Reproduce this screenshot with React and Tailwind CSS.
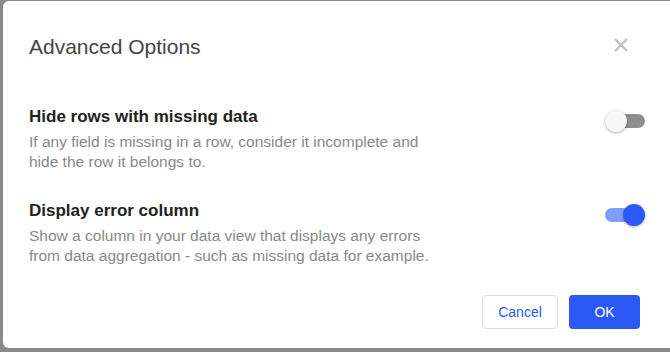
import { useState } from 'react'

const Toggle = ({ on, onChange }) => (
  <button
    type="button"
    onClick={onChange}
    className="relative mt-[5px] h-[22px] w-[40px] shrink-0"
  >
    <span
      className={`absolute left-0 top-[4px] h-[14px] w-[40px] rounded-full ${on ? 'bg-[#7d9ffb]' : 'bg-[#8f8f8f]'}`}
    />
    <span
      className={`absolute top-0 h-[22px] w-[22px] rounded-full shadow-[0_1px_3px_rgba(0,0,0,0.3)] ${on ? 'left-[18px] bg-[#2b59f6]' : 'left-0 bg-[#f7f7f7]'}`}
    />
  </button>
)

const OptionRow = ({ title, text, on, onChange }) => (
  <div className="flex items-start justify-between">
    <div className="w-[420px]">
      <h3 className="text-[17px] font-bold leading-[24px] text-[#222]">{title}</h3>
      <p className="mt-[3px] text-[15.5px] leading-[20px] text-[#888]">{text}</p>
    </div>
    <Toggle on={on} onChange={onChange} />
  </div>
)

const App = () => {
  const [hideRows, setHideRows] = useState(false)
  const [showErrors, setShowErrors] = useState(true)

  return (
    <div
      className="h-[352px] w-[670px] overflow-hidden bg-[#8a8a8a] pt-[1px] pl-[3px]"
      style={{ fontFamily: '"Liberation Sans", Arial, sans-serif' }}
    >
      <div className="h-[347px] w-[680px] rounded-[6px] bg-white pl-[26px] pt-[32px]">
        <div className="flex w-[616px] items-start justify-between">
          <h2 className="text-[21px] leading-[28px] font-light text-[#444]">Advanced Options</h2>
          <button type="button" className="mr-[17px] mt-[5px] text-[#bdbdbd]">
            <svg width="14" height="14" viewBox="0 0 14 14" fill="none" stroke="currentColor" strokeWidth="2">
              <path d="M1 1L13 13M13 1L1 13" />
            </svg>
          </button>
        </div>

        <div className="mt-[44px] w-[616px]">
          <OptionRow
            title="Hide rows with missing data"
            text="If any field is missing in a row, consider it incomplete and hide the row it belongs to."
            on={hideRows}
            onChange={() => setHideRows(!hideRows)}
          />
          <div className="mt-[27px]">
            <OptionRow
              title="Display error column"
              text="Show a column in your data view that displays any errors from data aggregation - such as missing data for example."
              on={showErrors}
              onChange={() => setShowErrors(!showErrors)}
            />
          </div>
        </div>

        <div className="mt-[29px] flex w-[611px] justify-end gap-[11px]">
          <button
            type="button"
            className="h-[34px] w-[76px] rounded-[4px] border border-[#dcdcdc] bg-white text-[14px] text-[#2b59f6]"
          >
            Cancel
          </button>
          <button
            type="button"
            className="h-[34px] w-[71px] rounded-[4px] bg-[#2b59f6] text-[14px] text-white"
          >
            OK
          </button>
        </div>
      </div>
    </div>
  )
}

export default App
